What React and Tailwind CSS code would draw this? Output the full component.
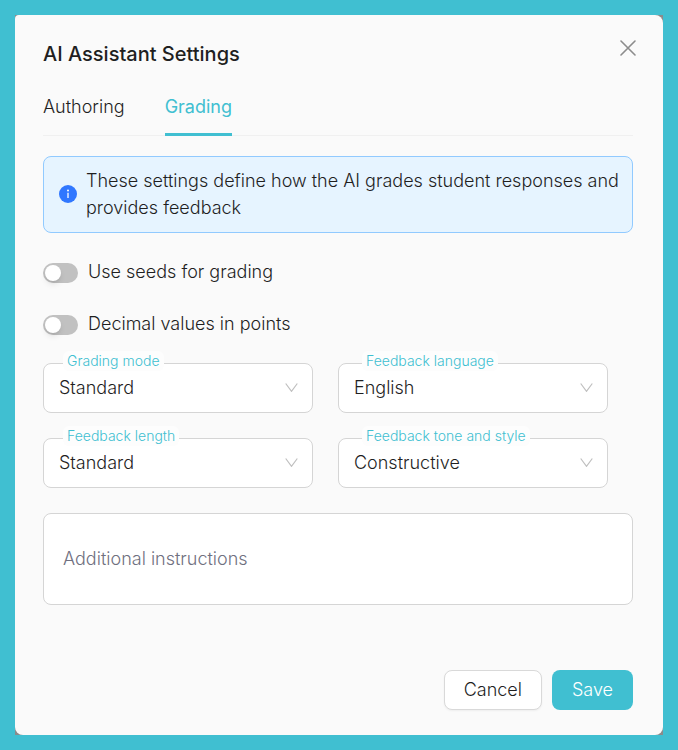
import React, { useState } from 'react';

const selectFields = [
  { id: 'grading-mode', label: 'Grading mode', labelClass: 'left-5', options: ['Standard', 'Strict', 'Lenient'] },
  { id: 'feedback-language', label: 'Feedback language', labelClass: 'left-6', options: ['English', 'Spanish', 'French'] },
  { id: 'feedback-length', label: 'Feedback length', labelClass: 'left-5', options: ['Standard', 'Short', 'Long'] },
  { id: 'feedback-tone', label: 'Feedback tone and style', labelClass: 'left-6', options: ['Constructive', 'Friendly', 'Formal'] }
];

const CloseIcon = () => (
  <svg width="16" height="16" viewBox="0 0 16 16" fill="none" stroke="#8c8c8c" strokeWidth="1.6" strokeLinecap="round" aria-hidden="true">
    <path d="M1 1l14 14M15 1L1 15" />
  </svg>
);

const InfoIcon = () => (
  <svg className="shrink-0" width="18" height="18" viewBox="0 0 18 18" aria-hidden="true">
    <circle cx="9" cy="9" r="9" fill="#3077ff" />
    <circle cx="9" cy="5.4" r="1" fill="#fff" />
    <path d="M9 7.8v5.2" stroke="#fff" strokeWidth="1.3" />
  </svg>
);

const ToggleRow = ({ id, label }) => {
  const [checked, setChecked] = useState(false);

  return (
    <div className="flex items-center gap-[10px]">
      <input
        id={id}
        type="checkbox"
        role="switch"
        checked={checked}
        onChange={(e) => setChecked(e.target.checked)}
        className="w-[35px] h-5 shrink-0 appearance-none rounded-full bg-[#c1c1c1] cursor-pointer transition-colors checked:bg-[#40bfd1] before:block before:size-4 before:m-[2px] before:rounded-full before:bg-white before:shadow-md before:transition-transform checked:before:translate-x-[15px]"
      />
      <label htmlFor={id} className="leading-[26px] pb-[2px]">{label}</label>
    </div>
  );
};

const SelectField = ({ id, label, labelClass, options }) => (
  <div className="relative">
    <select
      id={id}
      className="block w-full h-[50px] pl-[15px] pr-10 appearance-none rounded-lg border border-[#d5d5d5] bg-white"
    >
      {options.map((option) => (
        <option key={option}>{option}</option>
      ))}
    </select>
    <label
      htmlFor={id}
      className={`absolute -top-3 ${labelClass} px-1 rounded-md bg-[#fdfdfd] text-sm leading-5 text-[#40bfd1]`}
    >
      {label}
    </label>
    <svg
      className="absolute right-[15px] top-5 pointer-events-none"
      width="13"
      height="9"
      viewBox="0 0 13 9"
      fill="none"
      stroke="#bfbfbf"
      strokeWidth="1.2"
      aria-hidden="true"
    >
      <path d="M.7.5l5.8 7.8L12.3.5" />
    </svg>
  </div>
);

const App = () => {
  const [tab, setTab] = useState('Grading');

  return (
    <div className="min-h-screen flex flex-col bg-[#40bfd1] p-[15px] font-['Inter','Liberation_Sans',sans-serif] text-lg font-light text-[#1f1f1f]">
      <div className="flex-1 flex flex-col bg-[#8b8b8b]">
        <div role="dialog" aria-labelledby="settings-title" className="flex-1 flex flex-col rounded-lg rounded-tl-sm bg-[#fafafa] pl-7 pr-[30px] pt-6 pb-[25px]">
          {/* Header */}
          <div className="flex justify-between items-start">
            <h1 id="settings-title" className="text-xl leading-[30px] font-medium">AI Assistant Settings</h1>
            <button type="button" aria-label="Close" className="p-[1px] -mr-1">
              <CloseIcon />
            </button>
          </div>

          {/* Tabs */}
          <div role="tablist" className="flex gap-10 mt-[22px] border-b border-[#f0f0f0]">
            {['Authoring', 'Grading'].map((name) => (
              <button
                key={name}
                type="button"
                role="tab"
                aria-selected={tab === name}
                onClick={() => setTab(name)}
                className={`-mb-[1px] pt-[2px] pb-3 leading-7 border-b-3 ${
                  tab === name ? 'border-[#40bfd1] text-[#40bfd1] font-normal' : 'border-transparent'
                }`}
              >
                {name}
              </button>
            ))}
          </div>

          {/* Info message */}
          <div role="alert" className="flex items-center gap-[9px] mt-5 pl-[15px] pr-2 pt-[10px] pb-[11px] rounded-lg border border-[#91caff] bg-[#e6f4ff]">
            <InfoIcon />
            <p className="leading-[27px]">
              These settings define how the AI grades student responses and provides feedback
            </p>
          </div>

          {/* Toggles */}
          <div className="flex flex-col gap-6 mt-[26px]">
            <ToggleRow id="use-seeds" label="Use seeds for grading" />
            <ToggleRow id="decimal-points" label="Decimal values in points" />
          </div>

          {/* Select fields */}
          <div className="grid grid-cols-2 gap-[25px] mt-6 pr-[25px]">
            {selectFields.map((field) => (
              <SelectField key={field.id} {...field} />
            ))}
          </div>

          <textarea
            rows={1}
            aria-label="Additional instructions"
            placeholder="Additional instructions"
            className="block w-full mt-[25px] px-[19px] py-[31px] leading-7 resize-none rounded-lg border border-[#d5d5d5] bg-white placeholder:text-[#6f7080]"
          />

          {/* Actions */}
          <div className="flex justify-end gap-[10px] mt-auto pt-6">
            <button type="button" className="h-10 px-[19px] rounded-lg border border-[#d9d9d9] bg-white shadow-xs">
              Cancel
            </button>
            <button type="button" className="h-10 px-5 rounded-lg bg-[#40bfd1] text-white">
              Save
            </button>
          </div>
        </div>
      </div>
    </div>
  );
};

export default App;
